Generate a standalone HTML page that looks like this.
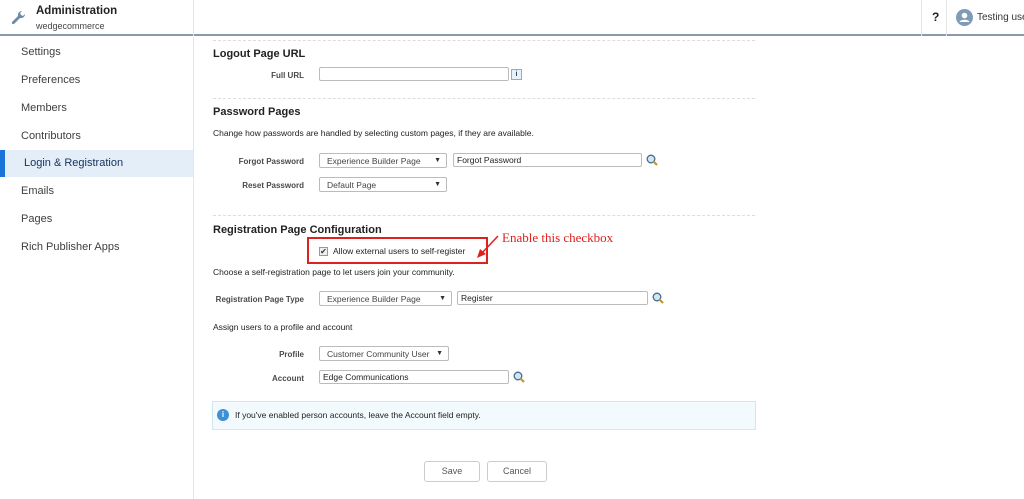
<!DOCTYPE html><html><head><style>
*{box-sizing:border-box}body{margin:0;width:1024px;height:499px;overflow:hidden;background:#fff;font-family:"Liberation Sans",Arial,sans-serif;position:relative;color:#333}
.a{position:absolute}
.nav{position:absolute;left:21px;font-size:11px;color:#3e3e3c}
.lbl{position:absolute;font-size:8px;font-weight:bold;color:#4a4a4a;text-align:right}
.h{position:absolute;left:213px;font-size:11px;font-weight:bold;color:#222}
.sel{position:absolute;height:15px;border:1px solid #bbb;border-radius:2px;font-size:8.5px;color:#444;padding:2px 0 0 7px;background:#fff}
.sel:after{content:"▼";position:absolute;right:5px;top:3px;font-size:7px;color:#333}
.inp{position:absolute;height:14px;border:1px solid #bbb;border-radius:2px;font-size:8.5px;color:#222;padding:1px 0 0 3px;background:#fff}
.dash{position:absolute;left:213px;width:542px;border-top:1px dashed #ddd}
.t{position:absolute;left:213px;font-size:8.5px;color:#222}
.mag{position:absolute;width:12px;height:12px}
</style></head><body>
<div class="a" style="left:0;top:0;width:1024px;height:36px;border-bottom:2px solid #8a9aad"></div>
<div class="a" style="left:193px;top:0;height:36px;border-left:1px solid #e5e5e5"></div>
<div class="a" style="left:921px;top:0;height:36px;border-left:1px solid #e5e5e5"></div>
<div class="a" style="left:946px;top:0;height:36px;border-left:1px solid #e5e5e5"></div>
<svg class="a" style="left:10px;top:10px" width="16" height="16" viewBox="0 0 16 16"><path d="M12 1a4 4 0 0 0-4 5L2 12a1.5 1.5 0 0 0 2 2l6-6a4 4 0 0 0 5-4l-2 2-2-1-1-2z" fill="#6f8aa6"/></svg>
<div class="a" style="left:36px;top:5px;font-size:11.5px;font-weight:bold;color:#222">Administration</div>
<div class="a" style="left:36px;top:21px;font-size:9px;color:#444">wedgecommerce</div>
<div class="a" style="left:932px;top:10px;font-size:12px;font-weight:bold;color:#222">?</div>
<svg class="a" style="left:956px;top:9px" width="17" height="17" viewBox="0 0 17 17"><circle cx="8.5" cy="8.5" r="8.5" fill="#7f9cb6"/><circle cx="8.5" cy="6.5" r="2.8" fill="#fff"/><path d="M3.5 13c1-3 9-3 10 0z" fill="#fff"/></svg>
<div class="a" style="left:977px;top:12px;font-size:10px;color:#333;white-space:nowrap">Testing user</div>
<div class="a" style="left:193px;top:37px;height:462px;border-left:1px solid #e5e5e5"></div>
<div class="a" style="left:0;top:150px;width:193px;height:27px;background:#e3eef9"></div>
<div class="a" style="left:0;top:150px;width:5px;height:27px;background:#1a73d9"></div>
<div class="nav" style="top:46px">Settings</div>
<div class="nav" style="top:74px">Preferences</div>
<div class="nav" style="top:102px">Members</div>
<div class="nav" style="top:130px">Contributors</div>
<div class="nav" style="top:157px;left:24px;color:#16325c">Login &amp; Registration</div>
<div class="nav" style="top:185px">Emails</div>
<div class="nav" style="top:213px">Pages</div>
<div class="nav" style="top:241px">Rich Publisher Apps</div>
<div class="dash" style="top:40px"></div>
<div class="h" style="top:48px">Logout Page URL</div>
<div class="lbl" style="left:240px;width:64px;top:71px">Full URL</div>
<div class="inp" style="left:319px;top:67px;width:190px"></div>
<div class="a" style="left:511px;top:69px;width:11px;height:11px;border:1px solid #9ab;background:#e8f0f8;font-size:7px;font-weight:bold;color:#246;text-align:center;line-height:9px">i</div>
<div class="dash" style="top:98px"></div>
<div class="h" style="top:106px">Password Pages</div>
<div class="t" style="top:128px">Change how passwords are handled by selecting custom pages, if they are available.</div>
<div class="lbl" style="left:210px;width:94px;top:157px">Forgot Password</div>
<div class="sel" style="left:319px;top:153px;width:128px">Experience Builder Page</div>
<div class="inp" style="left:453px;top:153px;width:189px">Forgot Password</div>
<svg class="mag" style="left:646px;top:154px" viewBox="0 0 12 12"><circle cx="5" cy="5" r="3.8" fill="#cfe6f5" stroke="#4a6a88" stroke-width="1.3"/><path d="M7.5 7.5l3.5 3.5" stroke="#c8961e" stroke-width="2.2"/></svg>
<div class="lbl" style="left:210px;width:94px;top:181px">Reset Password</div>
<div class="sel" style="left:319px;top:177px;width:128px">Default Page</div>
<div class="dash" style="top:215px"></div>
<div class="h" style="top:224px">Registration Page Configuration</div>
<div class="a" style="left:307px;top:237px;width:181px;height:27px;border:2px solid #e0201c"></div>
<div class="a" style="left:319px;top:247px;width:9px;height:9px;border:1px solid #999;background:#eee;font-size:8px;line-height:8px;text-align:center;color:#333">✔</div>
<div class="a" style="left:333px;top:246px;font-size:8.5px;color:#222">Allow external users to self-register</div>
<svg class="a" style="left:474px;top:232px" width="30" height="28"><path d="M24 4L7 22" stroke="#e0201c" stroke-width="1.5"/><path d="M3 26l3-9 6 5z" fill="#e0201c"/></svg>
<div class="a" style="left:502px;top:230px;font-family:'Liberation Serif',serif;font-size:13px;color:#e0201c">Enable this checkbox</div>
<div class="t" style="top:267px">Choose a self-registration page to let users join your community.</div>
<div class="lbl" style="left:205px;width:99px;top:295px">Registration Page Type</div>
<div class="sel" style="left:319px;top:291px;width:133px">Experience Builder Page</div>
<div class="inp" style="left:457px;top:291px;width:191px">Register</div>
<svg class="mag" style="left:652px;top:292px" viewBox="0 0 12 12"><circle cx="5" cy="5" r="3.8" fill="#cfe6f5" stroke="#4a6a88" stroke-width="1.3"/><path d="M7.5 7.5l3.5 3.5" stroke="#c8961e" stroke-width="2.2"/></svg>
<div class="t" style="top:322px">Assign users to a profile and account</div>
<div class="lbl" style="left:240px;width:64px;top:350px">Profile</div>
<div class="sel" style="left:319px;top:346px;width:130px">Customer Community User</div>
<div class="lbl" style="left:240px;width:64px;top:374px">Account</div>
<div class="inp" style="left:319px;top:370px;width:190px">Edge Communications</div>
<svg class="mag" style="left:513px;top:371px" viewBox="0 0 12 12"><circle cx="5" cy="5" r="3.8" fill="#cfe6f5" stroke="#4a6a88" stroke-width="1.3"/><path d="M7.5 7.5l3.5 3.5" stroke="#c8961e" stroke-width="2.2"/></svg>
<div class="a" style="left:212px;top:401px;width:544px;height:29px;background:#f3fafe;border:1px solid #cde7f4"></div>
<div class="a" style="left:217px;top:409px;width:12px;height:12px;border-radius:50%;background:#3d8fd6;color:#fff;font-size:8px;font-weight:bold;text-align:center;line-height:12px">i</div>
<div class="a" style="left:235px;top:410px;font-size:8.5px;color:#222">If you've enabled person accounts, leave the Account field empty.</div>
<div class="a" style="left:424px;top:461px;width:56px;height:21px;border:1px solid #ccc;border-radius:3px;font-size:9px;color:#555;text-align:center;line-height:19px">Save</div>
<div class="a" style="left:487px;top:461px;width:60px;height:21px;border:1px solid #ccc;border-radius:3px;font-size:9px;color:#555;text-align:center;line-height:19px">Cancel</div>
</body></html>
